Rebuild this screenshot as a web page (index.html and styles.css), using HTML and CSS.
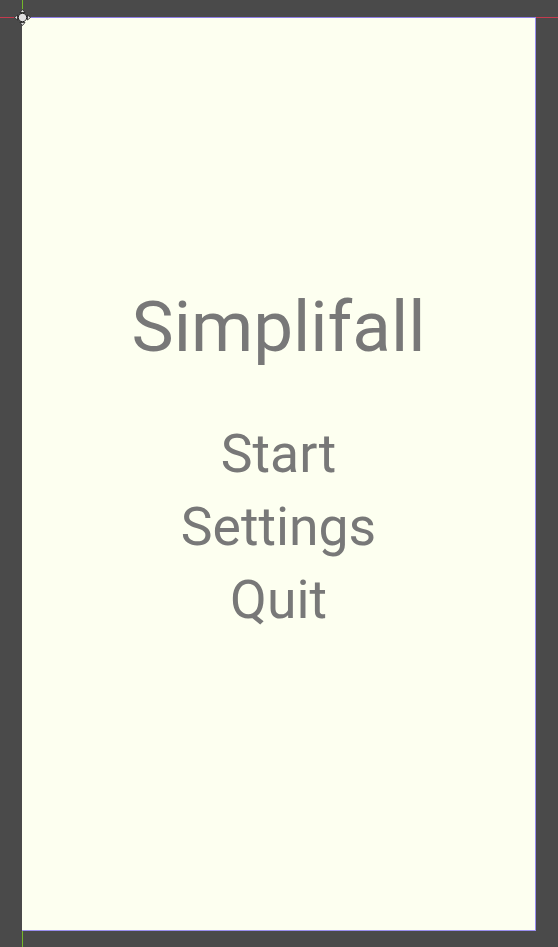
FILE: index.html
```html
<!DOCTYPE html>
<html><head><meta charset="UTF-8" /><link rel="stylesheet" href="styles.css"></head>
<body>
<div class="viewport">
	<!-- editor axes -->
	<div class="axis-x"></div>
	<div class="axis-y"></div>
	<div class="screen">
		<h1 class="title">Simplifall</h1>
		<div class="menu">
			<div class="item">Start</div>
			<div class="item">Settings</div>
			<div class="item">Quit</div>
		</div>
	</div>
	<!-- origin pivot -->
	<svg class="pivot" xmlns="http://www.w3.org/2000/svg" width="17" height="17" viewBox="-8.5 -8.5 17 17">
		<path d="M0 -8 L2.5 -5 L-2.5 -5 Z M0 8 L2.5 5 L-2.5 5 Z M-8 0 L-5 2.5 L-5 -2.5 Z M8 0 L5 2.5 L5 -2.5 Z" fill="#e8e8e8" stroke="#222" stroke-width="0.8" />
		<circle cx="0" cy="0" r="4.2" fill="#e0e0e0" stroke="#222" stroke-width="1" />
	</svg>
</div>
</body></html>
```
FILE: styles.css
```css
html, body { margin: 0; height: 100%; }
body { background: #4a4a4a; font-family: Roboto, "Liberation Sans", sans-serif; overflow: hidden; }
.viewport { position: relative; height: 100%; padding: 17px 0 0 22px; box-sizing: border-box; }
.axis-x { position: absolute; left: 0; right: 0; top: 17px; height: 1px; background: #c43a4e; }
.axis-y { position: absolute; top: 0; bottom: 0; left: 22px; width: 1px; background: #74b82a; }
.screen { position: relative; width: 513px; height: 912px; background: #fdfff0;
	border-top: 1px solid #8f7ee6; border-right: 1px solid #9a8ff0; border-bottom: 1px solid #9a8ff0;
	display: flex; flex-direction: column; align-items: center; color: #787878;
}
.title { margin: 268px 0 0; font-size: 71px; font-weight: normal; line-height: 82px; }
.menu { margin-top: 49px; display: flex; flex-direction: column; align-items: center; }
.item { font-size: 53.5px; line-height: 73px; }
.pivot { position: absolute; left: 14px; top: 9px; }
```
